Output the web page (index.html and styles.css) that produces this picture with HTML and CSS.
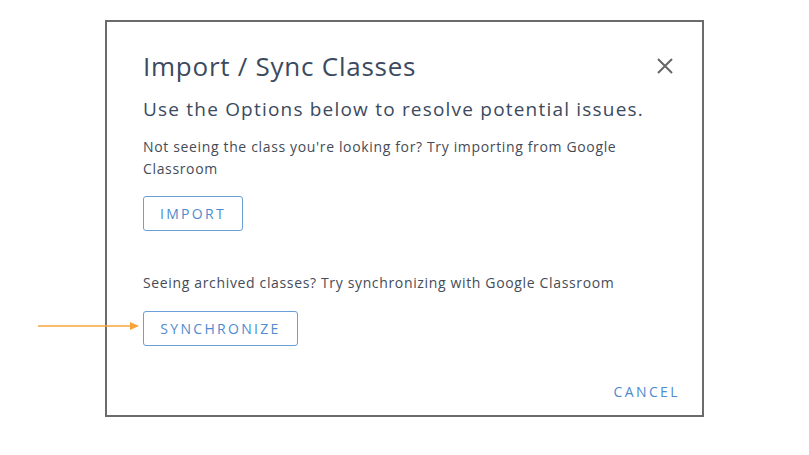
FILE: index.html
```html
<!DOCTYPE html>
<html>
<head>
<meta charset="utf-8">
<link rel="stylesheet" href="styles.css">
</head>
<body>
<div class="stage">
  <div class="dialog">
    <div class="header">
      <h1 class="title">Import / Sync Classes</h1>
      <button class="close" aria-label="Close">
        <svg width="18" height="18" viewBox="0 0 18 18"><path d="M2 2 L16 16 M16 2 L2 16" stroke="#666" stroke-width="2" fill="none"/></svg>
      </button>
    </div>
    <h2 class="subtitle">Use the Options below to resolve potential issues.</h2>
    <p class="text">Not seeing the class you're looking for? Try importing from Google Classroom</p>
    <button class="btn btn-import">IMPORT</button>
    <p class="text text2">Seeing archived classes? Try synchronizing with Google Classroom</p>
    <div class="sync-row">
      <button class="btn btn-sync">SYNCHRONIZE</button>
      <div class="arrow">
        <svg width="102" height="10" viewBox="0 0 102 10"><path d="M0 5 H94" stroke="#f7a43c" stroke-width="1.5"/><path d="M92 1 L101 5 L92 9 Z" fill="#f7a43c"/></svg>
      </div>
    </div>
    <div class="footer">
      <button class="cancel">CANCEL</button>
    </div>
  </div>
</div>
</body>
</html>
```
FILE: styles.css
```css
* { box-sizing: border-box; }
html, body { margin: 0; background: #fff; }
body { font-family: "Open Sans", "DejaVu Sans", sans-serif; }
.stage { padding: 20px 0 0 105px; }
.dialog {
  width: 599px;
  height: 397px;
  border: 2px solid #6b6b6b;
  padding: 26px 22px 0 36px;
  display: flex;
  flex-direction: column;
  align-items: flex-start;
  position: relative;
}
.header { display: flex; justify-content: space-between; align-items: center; width: 100%; padding-right: 6px; }
.title {
  margin: 0;
  font-weight: 400;
  font-size: 26px;
  line-height: 36px;
  color: #3b4a5e;
  letter-spacing: 0.75px;
}
.close { background: none; border: 0; padding: 0; width: 18px; height: 18px; display: flex; }
.subtitle {
  margin: 10px 0 0;
  font-weight: 400;
  font-size: 19px;
  line-height: 30px;
  color: #3b4a5e;
  letter-spacing: 1.2px;
}
.text {
  margin: 12px 0 0;
  font-size: 14px;
  line-height: 22px;
  color: #444c58;
  letter-spacing: 0.65px;
  max-width: 520px;
}
.text2 { margin-top: 41px; }
.btn {
  font-family: inherit;
  background: #fff;
  border: 1px solid #6a9fd8;
  border-radius: 3px;
  color: #4f8bd0;
  font-size: 14px;
  letter-spacing: 2.3px;
  height: 35px;
  padding: 0;
  margin-top: 16px;
  text-align: center;
}
.btn-import { width: 100px; margin-top: 16px; }
.btn-sync { width: 155px; margin-top: 0; display: block; }
.sync-row { margin-top: 17px; position: relative; }
.arrow { position: absolute; left: -105px; top: 10px; }
.arrow svg { display: block; }
.footer { margin-top: auto; width: 100%; display: flex; justify-content: flex-end; padding-bottom: 14px; }
.cancel {
  font-family: inherit;
  background: none;
  border: 0;
  color: #4f8bd0;
  font-size: 14px;
  letter-spacing: 2.4px;
  padding: 0;
}
```
